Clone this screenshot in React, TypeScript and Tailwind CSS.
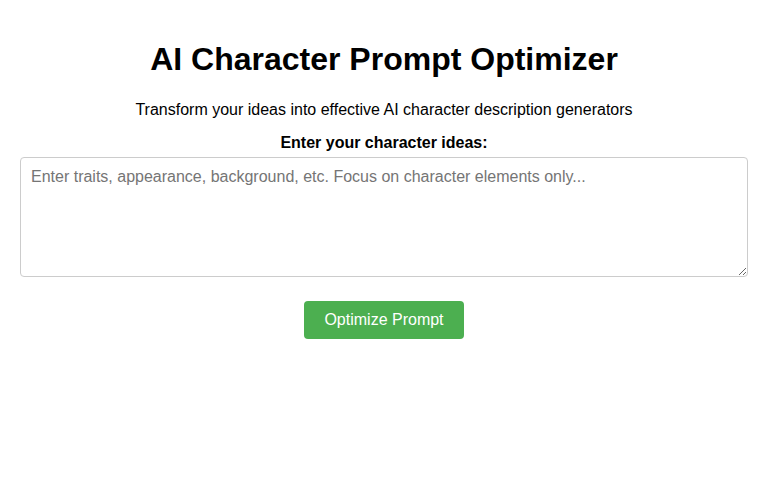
import React from "react";

export default function App() {
  return (
    <div className="min-h-[480px] bg-white px-[20px] pt-[41px] text-black" style={{ fontFamily: '"Liberation Sans", Arial, sans-serif' }}>
      <h1 className="text-center text-[32px] font-bold leading-[37px]">AI Character Prompt Optimizer</h1>
      <p className="mt-[23px] text-center text-[16px] leading-[18px]">
        Transform your ideas into effective AI character description generators
      </p>
      <label htmlFor="ideas" className="mt-[15px] block text-center text-[16px] font-bold leading-[18px]">
        Enter your character ideas:
      </label>
      <textarea
        id="ideas"
        className="mt-[5px] block h-[120px] w-full resize-y rounded-[4px] border border-[#ccc] p-[10px] text-[16px] leading-[18px] text-black placeholder:text-[#757575] outline-none"
        placeholder="Enter traits, appearance, background, etc. Focus on character elements only..."
        style={{ fontFamily: '"Liberation Sans", Arial, sans-serif' }}
      />
      <div className="mt-[24px] flex justify-center">
        <button className="h-[38px] rounded-[4px] bg-[#4CAF50] px-[20px] text-[16px] leading-[18px] text-white">
          Optimize Prompt
        </button>
      </div>
    </div>
  );
}
